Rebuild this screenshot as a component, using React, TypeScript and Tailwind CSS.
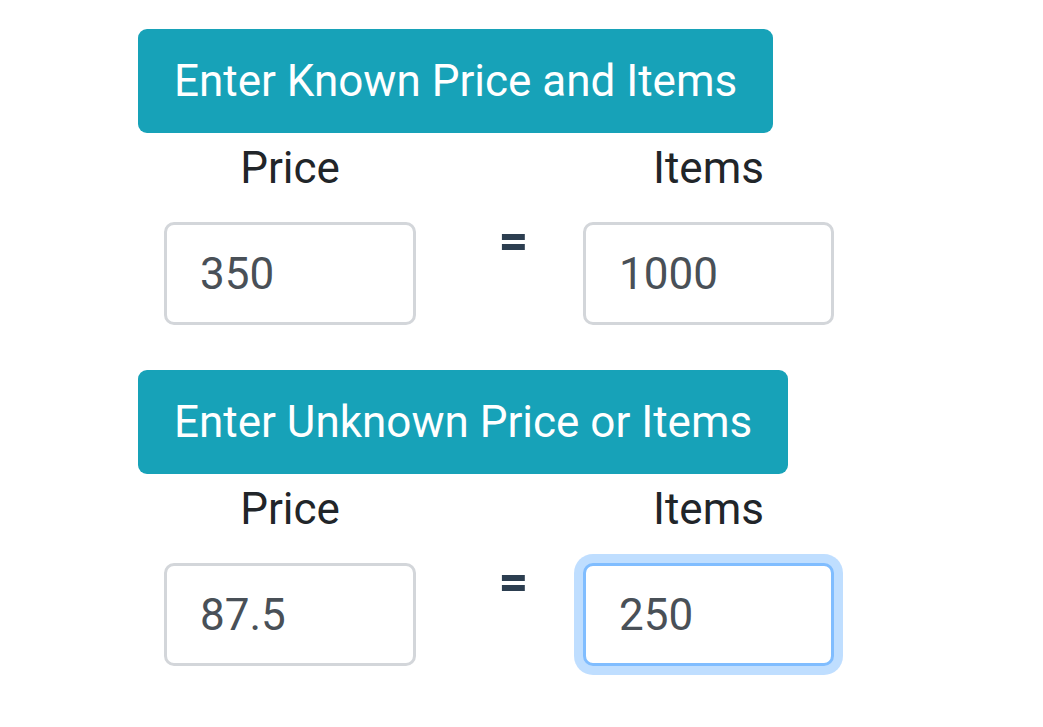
import React, { useState } from 'react';

const font = { fontFamily: 'Roboto, "Noto Sans", sans-serif' };

type SectionProps = {
  title: string;
  price: string;
  items: string;
  focusItems?: boolean;
  onPrice: (v: string) => void;
  onItems: (v: string) => void;
};

const Section = ({ title, price, items, focusItems, onPrice, onItems }: SectionProps) => {
  return (
    <div className="flex flex-col items-start">
      <div className="bg-[#17a2b8] text-white text-[44px] leading-[66px] px-[36px] py-[19px] rounded-[9px]">
        {title}
      </div>
      <div className="ml-[26px] grid grid-cols-[252px_167px_251px]">
        <div className="text-center text-[#212529] text-[44px] leading-[66px] mt-[2px]">Price</div>
        <div />
        <div className="text-center text-[#212529] text-[44px] leading-[66px] mt-[2px]">Items</div>
        <input
          value={price}
          onChange={e => onPrice(e.target.value)}
          className="mt-[21px] h-[103px] w-[252px] border-[3px] border-[#d3d6da] rounded-[10px] pl-[33px] text-[44px] text-[#495057] outline-none bg-white"
          style={font}
        />
        <div className="mt-[17px] flex justify-center pl-[28px]">
          <span className="text-[46px] leading-[44px] font-black text-[#2c3e50] scale-x-[1.1]">=</span>
        </div>
        <input
          value={items}
          onChange={e => onItems(e.target.value)}
          className={
            focusItems
              ? 'mt-[21px] h-[103px] w-[251px] border-[3px] border-[#80bdff] rounded-[10px] pl-[33px] text-[44px] text-[#495057] outline-none bg-white shadow-[0_0_0_9px_rgba(0,123,255,0.25)]'
              : 'mt-[21px] h-[103px] w-[251px] border-[3px] border-[#d3d6da] rounded-[10px] pl-[33px] text-[44px] text-[#495057] outline-none bg-white'
          }
          style={font}
        />
      </div>
    </div>
  );
};

export default function App() {
  const [p1, setP1] = useState('350');
  const [i1, setI1] = useState('1000');
  const [p2, setP2] = useState('87.5');
  const [i2, setI2] = useState('250');

  return (
    <div className="min-h-screen bg-white pl-[138px] pt-[29px] flex flex-col gap-[45px]" style={font}>
      <Section title="Enter Known Price and Items" price={p1} items={i1} onPrice={setP1} onItems={setI1} />
      <Section
        title="Enter Unknown Price or Items"
        price={p2}
        items={i2}
        focusItems
        onPrice={setP2}
        onItems={setI2}
      />
    </div>
  );
}
